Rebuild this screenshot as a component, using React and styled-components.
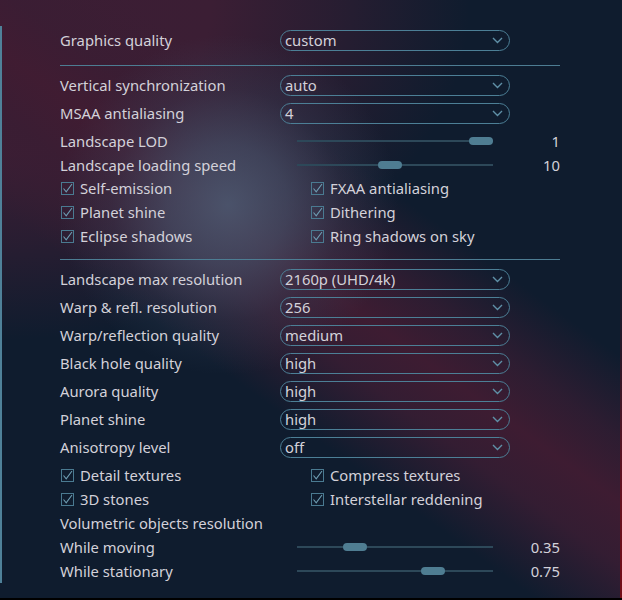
import React from "react";
import styled, { createGlobalStyle } from "styled-components";

const Global = createGlobalStyle`
  html, body { margin: 0; padding: 0; background: #000; }
  body { width: 622px; height: 600px; overflow: hidden; }
`;

const Page = styled.div`
  width: 622px;
  height: 598px;
  box-sizing: border-box;
  padding-top: 28px;
  font-family: "Noto Sans", "Open Sans", sans-serif;
  font-size: 14.8px;
  color: #d3d1d9;
  background:
    linear-gradient(to bottom, rgba(110, 10, 20, 0) 45%, rgba(120, 12, 22, 0.95)) right top / 2px 100% no-repeat,
    radial-gradient(circle 170px at 228px 205px, rgba(78, 96, 120, 0.8) 0%, rgba(72, 90, 114, 0.6) 35%, rgba(62, 78, 102, 0.25) 68%, rgba(60, 75, 100, 0) 100%),
    linear-gradient(36deg, rgba(60, 29, 51, 0) 37%, rgba(58, 29, 51, 0.85) 46%, rgba(64, 28, 50, 0.95) 52%, rgba(58, 29, 51, 0.7) 58%, rgba(60, 29, 51, 0) 66%),
    radial-gradient(ellipse 470px 340px at 0 0, #3c1d34 0%, #3b1e34 45%, rgba(59, 30, 52, 0.6) 70%, rgba(59, 30, 52, 0) 100%),
    #0f1c2e;
`;

const Frame = styled.div`
  height: 557px;
  box-sizing: border-box;
  border-left: 2px solid #4f8199;
  padding-left: 58px;
  width: 560px;
`;

const Group = styled.div`
  display: flex;
  flex-direction: column;
  margin-top: ${(p) => p.$mt || 0}px;
`;

const Divider = styled.div`
  height: 1px;
  background: #4d7d93;
  margin: 11px 0 5px;
`;

const Row = styled.div`
  display: flex;
  align-items: center;
  height: ${(p) => p.$h || 24}px;
`;

const Label = styled.div`
  width: ${(p) => p.$w || 220}px;
  flex: none;
  white-space: nowrap;
  line-height: 20px;
`;

const Select = styled.div`
  box-sizing: border-box;
  width: 230px;
  height: 21px;
  border: 1px solid #4c7f96;
  border-radius: 11px;
  display: flex;
  align-items: center;
  justify-content: space-between;
  padding: 0 6px 0 4px;
  line-height: 19px;
`;

const Chevron = () => (
  <svg width="11" height="7" viewBox="0 0 11 7">
    <polyline points="1,1 5.5,5.5 10,1" fill="none" stroke="#5f90a7" strokeWidth="1.4" />
  </svg>
);

const Track = styled.div`
  position: relative;
  width: 196px;
  height: 2px;
  background: #2d4859;
  flex: none;
`;

const Handle = styled.div`
  position: absolute;
  top: -3px;
  width: 24px;
  height: 8px;
  border-radius: 4px;
  background: #4f7d92;
`;

const Value = styled.div`
  flex: 1;
  text-align: right;
  line-height: 20px;
`;

const CheckGrid = styled.div`
  display: grid;
  grid-template-columns: 250px 1fr;
  grid-auto-rows: 24px;
  margin-top: ${(p) => p.$mt || 0}px;
`;

const CheckItem = styled.div`
  display: flex;
  align-items: center;
  padding-left: 1px;
  gap: 6px;
  white-space: nowrap;
  line-height: 20px;
`;

const Box = styled.span`
  box-sizing: border-box;
  width: 13px;
  height: 13px;
  border: 1px solid #4a7a91;
  display: flex;
  align-items: center;
  justify-content: center;
  flex: none;
`;

const Check = ({ label }) => (
  <CheckItem>
    <Box>
      <svg width="11" height="11" viewBox="0 0 11 11">
        <polyline points="1.5,5.5 4.2,8.8 10,1" fill="none" stroke="#6e9db3" strokeWidth="1.1" />
      </svg>
    </Box>
    {label}
  </CheckItem>
);

const DropRow = ({ label, value }) => (
  <Row $h={28}>
    <Label $w={220}>{label}</Label>
    <Select>
      <span>{value}</span>
      <Chevron />
    </Select>
  </Row>
);

const SliderRow = ({ label, pos, value }) => (
  <Row>
    <Label $w={237}>{label}</Label>
    <Track>
      <Handle style={{ left: `${pos * 172}px` }} />
    </Track>
    <Value>{value}</Value>
  </Row>
);

export default function App() {
  return (
    <Page>
      <Global />
      <Frame>
        <Group $mt={-2}>
          <DropRow label="Graphics quality" value="custom" />
        </Group>
        <Divider />
        <Group>
          <DropRow label="Vertical synchronization" value="auto" />
          <DropRow label="MSAA antialiasing" value="4" />
        </Group>
        <Group $mt={2}>
          <SliderRow label="Landscape LOD" pos={1} value="1" />
          <SliderRow label="Landscape loading speed" pos={0.47} value="10" />
        </Group>
        <CheckGrid $mt={-1}>
          <Check label="Self-emission" />
          <Check label="FXAA antialiasing" />
          <Check label="Planet shine" />
          <Check label="Dithering" />
          <Check label="Eclipse shadows" />
          <Check label="Ring shadows on sky" />
        </CheckGrid>
        <Divider />
        <Group>
          <DropRow label="Landscape max resolution" value="2160p (UHD/4k)" />
          <DropRow label="Warp & refl. resolution" value="256" />
          <DropRow label="Warp/reflection quality" value="medium" />
          <DropRow label="Black hole quality" value="high" />
          <DropRow label="Aurora quality" value="high" />
          <DropRow label="Planet shine" value="high" />
          <DropRow label="Anisotropy level" value="off" />
        </Group>
        <CheckGrid $mt={2}>
          <Check label="Detail textures" />
          <Check label="Compress textures" />
          <Check label="3D stones" />
          <Check label="Interstellar reddening" />
        </CheckGrid>
        <Row>
          <Label $w={300}>Volumetric objects resolution</Label>
        </Row>
        <SliderRow label="While moving" pos={0.27} value="0.35" />
        <SliderRow label="While stationary" pos={0.72} value="0.75" />
      </Frame>
    </Page>
  );
}
